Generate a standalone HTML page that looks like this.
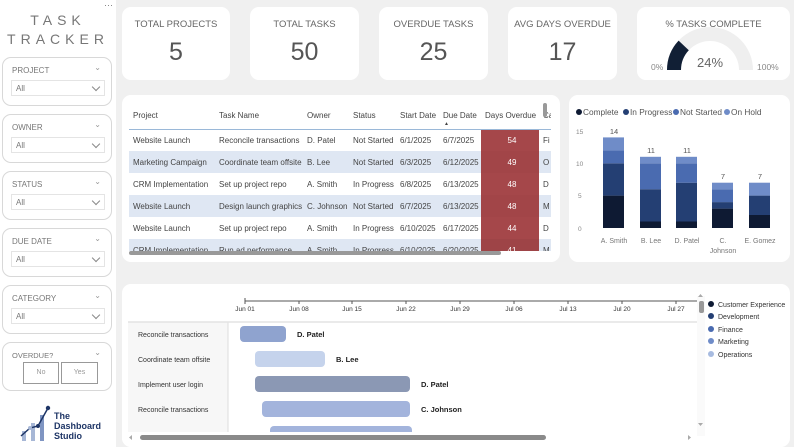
<!DOCTYPE html>
<html><head><meta charset="utf-8"><style>
*{margin:0;padding:0;box-sizing:border-box}
body{width:794px;height:447px;overflow:hidden;background:#f0f0f0;font-family:"Liberation Sans",sans-serif;color:#444;position:relative}
.a{position:absolute}
.card{position:absolute;background:#fff;border-radius:9px}
.side{position:absolute;left:0;top:0;width:116px;height:447px;background:#fff}
.f{position:absolute;left:2px;width:110px;height:49px;border:1px solid #d8d8d8;border-radius:9px;background:#fff}
.f .l{position:absolute;left:9px;top:8px;font-size:8px;color:#777}
.f .c{position:absolute;right:10px;top:5px;font-size:8px;color:#999}
.f .s{position:absolute;left:8px;top:22px;width:94px;height:16px;border:1px solid #e4e4e4;font-size:8px;color:#777;padding:3px 0 0 4px}
.f .s:after{content:"";position:absolute;right:5px;top:3px;width:5px;height:5px;border-right:1px solid #888;border-bottom:1px solid #888;transform:rotate(45deg)}
.kt{position:absolute;width:100%;text-align:center;top:12px;font-size:9.5px;color:#666}
.kv{position:absolute;width:100%;text-align:center;top:31px;font-size:25px;color:#555}
table{border-collapse:collapse;font-size:8px;color:#444}
td{height:22px;padding:0 0 0 4px;white-space:nowrap}
</style></head><body>
<div class="side">
<div class="a" style="left:0;top:11px;width:116px;text-align:center;font-size:14px;letter-spacing:5px;color:#777;line-height:19px">TASK<br>TRACKER</div>
<div class="a" style="left:104px;top:0;font-size:9px;color:#777">···</div>
<div class="f" style="top:57px"><span class="l">PROJECT</span><span class="c">⌄</span><div class="s">All</div></div>
<div class="f" style="top:114px"><span class="l">OWNER</span><span class="c">⌄</span><div class="s">All</div></div>
<div class="f" style="top:171px"><span class="l">STATUS</span><span class="c">⌄</span><div class="s">All</div></div>
<div class="f" style="top:228px"><span class="l">DUE DATE</span><span class="c">⌄</span><div class="s">All</div></div>
<div class="f" style="top:285px"><span class="l">CATEGORY</span><span class="c">⌄</span><div class="s">All</div></div>
<div class="f" style="top:342px"><span class="l" style="font-size:7.5px">OVERDUE?</span><span class="c">⌄</span>
<div class="a" style="left:20px;top:19px;width:36px;height:22px;border:1px solid #999;font-size:7px;color:#999;text-align:center;line-height:20px">No</div>
<div class="a" style="left:58px;top:19px;width:37px;height:22px;border:1px solid #999;font-size:7px;color:#999;text-align:center;line-height:20px">Yes</div></div>
<svg class="a" style="left:18px;top:403px" width="36" height="40"><g fill="#a7b7d6"><rect x="13" y="20" width="4" height="18"/><rect x="22" y="12" width="4" height="26" fill="#7f95c2"/><rect x="4" y="28" width="4" height="10"/></g><path d="M3 33 L12 25 L20 23 L30 5" stroke="#1e3566" stroke-width="1.5" fill="none"/><circle cx="30" cy="5" r="2.2" fill="#1e3566"/><circle cx="20" cy="23" r="2" fill="#1e3566"/><circle cx="12" cy="25" r="2" fill="#a7b7d6"/></svg>
<div class="a" style="left:54px;top:411px;font-size:9px;font-weight:bold;color:#1e3566;line-height:10px">The<br>Dashboard<br>Studio</div>
</div>

<div class="card" style="left:122px;top:7px;width:108px;height:73px"><div class="kt">TOTAL PROJECTS</div><div class="kv">5</div></div>
<div class="card" style="left:250px;top:7px;width:109px;height:73px"><div class="kt">TOTAL TASKS</div><div class="kv">50</div></div>
<div class="card" style="left:379px;top:7px;width:109px;height:73px"><div class="kt">OVERDUE TASKS</div><div class="kv">25</div></div>
<div class="card" style="left:508px;top:7px;width:109px;height:73px"><div class="kt">AVG DAYS OVERDUE</div><div class="kv">17</div></div>
<div class="card" style="left:637px;top:7px;width:153px;height:73px"><div class="kt">% TASKS COMPLETE</div>
<svg class="a" style="left:0;top:0" width="153" height="73">
<path d="M30 63 A43 43 0 0 1 116 63 L102 63 A29 29 0 0 0 44 63 Z" fill="#efefef"/>
<path d="M30 63 A43 43 0 0 1 41.6 33.6 L51.8 43.2 A29 29 0 0 0 44 63 Z" fill="#111f35"/>
<text x="73" y="60" font-size="13" fill="#666" text-anchor="middle" font-family="Liberation Sans">24%</text>
<text x="14" y="63" font-size="8.5" fill="#888" font-family="Liberation Sans">0%</text>
<text x="120" y="63" font-size="8.5" fill="#888" font-family="Liberation Sans">100%</text></svg></div>

<div class="card" style="left:122px;top:95px;width:438px;height:167px;overflow:hidden">
<div class="a" style="left:7px;top:8px;width:422px;height:148px;overflow:hidden">
<table style="width:440px">
<tr style="height:26px;color:#444"><td style="width:86px">Project</td><td style="width:88px">Task Name</td><td style="width:46px">Owner</td><td style="width:47px">Status</td><td style="width:43px">Start Date</td><td style="width:42px;position:relative">Due Date<span style="position:absolute;left:5px;top:18px;font-size:5px">▲</span></td><td style="width:58px">Days Overdue</td><td>Ca</td></tr>
<tr style="border-top:1.5px solid #9ab8d8"><td>Website Launch</td><td>Reconcile transactions</td><td>D. Patel</td><td>Not Started</td><td>6/1/2025</td><td>6/7/2025</td><td style="background:#a5474a;color:#fff;text-align:center">54</td><td>Fi</td></tr>
<tr style="background:#dfe7f3"><td>Marketing Campaign</td><td>Coordinate team offsite</td><td>B. Lee</td><td>Not Started</td><td>6/3/2025</td><td>6/12/2025</td><td style="background:#a24548;color:#fff;text-align:center">49</td><td>O</td></tr>
<tr><td>CRM Implementation</td><td>Set up project repo</td><td>A. Smith</td><td>In Progress</td><td>6/8/2025</td><td>6/13/2025</td><td style="background:#a5474a;color:#fff;text-align:center">48</td><td>D</td></tr>
<tr style="background:#dfe7f3"><td>Website Launch</td><td>Design launch graphics</td><td>C. Johnson</td><td>Not Started</td><td>6/7/2025</td><td>6/13/2025</td><td style="background:#a24548;color:#fff;text-align:center">48</td><td>M</td></tr>
<tr><td>Website Launch</td><td>Set up project repo</td><td>A. Smith</td><td>In Progress</td><td>6/10/2025</td><td>6/17/2025</td><td style="background:#a5474a;color:#fff;text-align:center">44</td><td>D</td></tr>
<tr style="background:#dfe7f3"><td>CRM Implementation</td><td>Run ad performance</td><td>A. Smith</td><td>In Progress</td><td>6/10/2025</td><td>6/20/2025</td><td style="background:#9e4447;color:#fff;text-align:center">41</td><td>M</td></tr>
</table></div>
<div class="a" style="left:7px;top:156px;width:372px;height:4px;background:#999;border-radius:2px"></div>
<div class="a" style="left:421px;top:8px;width:4px;height:14px;background:#999;border-radius:2px"></div>
</div>

<div class="card" style="left:569px;top:95px;width:221px;height:167px">
<svg width="221" height="167" font-family="Liberation Sans">
<g font-size="8.3" fill="#555">
<circle cx="10" cy="17" r="3" fill="#0e1a33"/><text x="14" y="20">Complete</text>
<circle cx="57" cy="17" r="3" fill="#243f73"/><text x="61" y="20">In Progress</text>
<circle cx="107" cy="17" r="3" fill="#4a6bb0"/><text x="111" y="20">Not Started</text>
<circle cx="158" cy="17" r="3" fill="#6f8cc8"/><text x="162" y="20">On Hold</text>
</g>
<g font-size="6.5" fill="#888"><text x="7" y="39">15</text><text x="7" y="71">10</text><text x="9" y="103">5</text><text x="9" y="136">0</text></g>
<rect x="34" y="100.6" width="21" height="32.4" fill="#0e1a33"/><rect x="34" y="68.3" width="21" height="32.3" fill="#243f73"/><rect x="34" y="55.4" width="21" height="12.9" fill="#4a6bb0"/><rect x="34" y="42.4" width="21" height="13" fill="#6f8cc8"/>
<rect x="71" y="126.5" width="21" height="6.5" fill="#0e1a33"/><rect x="71" y="94.2" width="21" height="32.3" fill="#243f73"/><rect x="71" y="68.3" width="21" height="25.9" fill="#4a6bb0"/><rect x="71" y="61.8" width="21" height="6.5" fill="#6f8cc8"/>
<rect x="107" y="126.5" width="21" height="6.5" fill="#0e1a33"/><rect x="107" y="87.7" width="21" height="38.8" fill="#243f73"/><rect x="107" y="68.3" width="21" height="19.4" fill="#4a6bb0"/><rect x="107" y="61.8" width="21" height="6.5" fill="#6f8cc8"/>
<rect x="143" y="113.6" width="21" height="19.4" fill="#0e1a33"/><rect x="143" y="107.1" width="21" height="6.5" fill="#243f73"/><rect x="143" y="94.2" width="21" height="12.9" fill="#4a6bb0"/><rect x="143" y="87.7" width="21" height="6.5" fill="#6f8cc8"/>
<rect x="180" y="120" width="21" height="13" fill="#0e1a33"/><rect x="180" y="100.6" width="21" height="19.4" fill="#243f73"/><rect x="180" y="87.7" width="21" height="12.9" fill="#6f8cc8"/>
<g font-size="7.5" fill="#555" text-anchor="middle"><text x="45" y="39">14</text><text x="82" y="58">11</text><text x="118" y="58">11</text><text x="154" y="84">7</text><text x="191" y="84">7</text></g>
<g font-size="7" fill="#777" text-anchor="middle"><text x="45" y="148">A. Smith</text><text x="82" y="148">B. Lee</text><text x="118" y="148">D. Patel</text><text x="154" y="148">C.</text><text x="154" y="158">Johnson</text><text x="191" y="148">E. Gomez</text></g>
</svg></div>

<div class="card" style="left:122px;top:284px;width:668px;height:163px;overflow:hidden">
<svg width="668" height="163" font-family="Liberation Sans">
<rect x="6" y="38" width="100" height="120" fill="#f7f7f7"/>
<line x1="106" y1="38" x2="106" y2="158" stroke="#ddd"/>
<line x1="6" y1="38" x2="575" y2="38" stroke="#e4e4e4" stroke-width="1.5"/>
<line x1="123" y1="17" x2="575" y2="17" stroke="#555"/>
<g stroke="#555"><line x1="123" y1="14" x2="123" y2="20"/><line x1="177" y1="17" x2="177" y2="20"/><line x1="230" y1="17" x2="230" y2="20"/><line x1="284" y1="17" x2="284" y2="20"/><line x1="338" y1="17" x2="338" y2="20"/><line x1="392" y1="17" x2="392" y2="20"/><line x1="446" y1="17" x2="446" y2="20"/><line x1="500" y1="17" x2="500" y2="20"/><line x1="554" y1="17" x2="554" y2="20"/></g>
<g font-size="6.5" fill="#333" text-anchor="middle"><text x="123" y="27">Jun 01</text><text x="177" y="27">Jun 08</text><text x="230" y="27">Jun 15</text><text x="284" y="27">Jun 22</text><text x="338" y="27">Jun 29</text><text x="392" y="27">Jul 06</text><text x="446" y="27">Jul 13</text><text x="500" y="27">Jul 20</text><text x="554" y="27">Jul 27</text></g>
<g font-size="7" fill="#333"><text x="16" y="53">Reconcile transactions</text><text x="16" y="78">Coordinate team offsite</text><text x="16" y="103">Implement user login</text><text x="16" y="128">Reconcile transactions</text></g>
<rect x="118" y="42" width="46" height="16" rx="4" fill="#8fa3cf"/>
<rect x="133" y="67" width="70" height="16" rx="4" fill="#c5d3ec"/>
<rect x="133" y="92" width="155" height="16" rx="4" fill="#8b98b4"/>
<rect x="140" y="117" width="148" height="16" rx="4" fill="#a3b4dc"/>
<rect x="148" y="142" width="142" height="16" rx="4" fill="#a3b4dc"/>
<g font-size="7.5" font-weight="bold" fill="#222"><text x="175" y="53">D. Patel</text><text x="214" y="78">B. Lee</text><text x="299" y="103">D. Patel</text><text x="299" y="128">C. Johnson</text></g>
<rect x="0" y="148" width="580" height="15" fill="#fff"/>
<rect x="18" y="151" width="406" height="5" rx="2.5" fill="#8a8a8a"/>
<path d="M10 151 l-3 2.5 3 2.5z M566 151 l3 2.5 -3 2.5z" fill="#aaa"/>
<rect x="575" y="12" width="8" height="140" fill="#fafafa"/>
<rect x="577" y="17" width="5" height="12" rx="2" fill="#999"/>
<path d="M576 13 l2.5 -3 2.5 3z M576 139 l2.5 3 2.5 -3z" fill="#aaa"/>
<g font-size="7" fill="#333"><circle cx="589" cy="20" r="3" fill="#0e1a33"/><text x="596" y="23">Customer Experience</text>
<circle cx="589" cy="32" r="3" fill="#243f73"/><text x="596" y="35">Development</text>
<circle cx="589" cy="45" r="3" fill="#4a6bb0"/><text x="596" y="48">Finance</text>
<circle cx="589" cy="57" r="3" fill="#6f8cc8"/><text x="596" y="60">Marketing</text>
<circle cx="589" cy="70" r="3" fill="#a7bbe0"/><text x="596" y="73">Operations</text></g>
</svg></div>
</body></html>
